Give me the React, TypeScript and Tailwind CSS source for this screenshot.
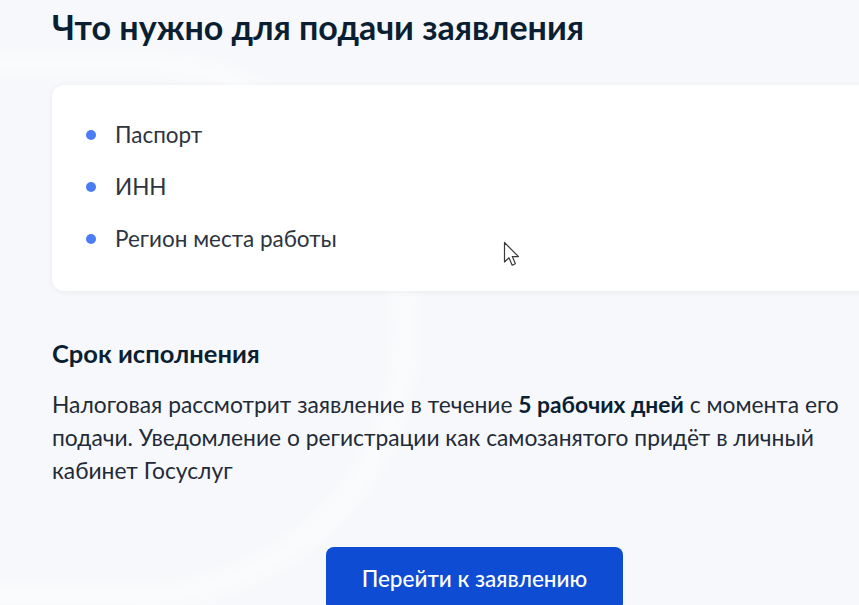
const items = ['Паспорт', 'ИНН', 'Регион места работы'];

function Cursor() {
  return (
    <svg className="absolute left-[503px] top-[241px]" width="20" height="28" viewBox="0 0 20 28" fill="none">
      <path
        d="M1.5 1.5 L1.5 21 L6 16.8 L9.2 24.2 L12.4 22.8 L9.3 15.6 L15.5 15.6 Z"
        fill="#fff"
        stroke="#3a3a3a"
        strokeWidth="1.2"
        strokeLinejoin="round"
      />
    </svg>
  );
}

export default function App() {
  return (
    <div
      className="relative w-full h-[605px] overflow-hidden bg-[#f7f8fb]"
      style={{ fontFamily: 'Lato, "Noto Sans", sans-serif' }}
    >
      <div className="pointer-events-none absolute -left-[300px] top-[50px] w-[720px] h-[560px] rounded-full border-[28px] border-white/40 blur-[6px]" />
      <div className="relative w-[845px] ml-[52px] pt-[7px]">
        <h1 className="text-[34px] leading-[40px] font-bold text-[#0b1f33]">
          Что нужно для подачи заявления
        </h1>

        <div className="mt-[38px] rounded-xl bg-white shadow-[0_1px_6px_rgba(11,31,51,0.06)] pl-[34px] pt-[35px] pb-[37px] flex flex-col gap-[22px]">
          {items.map((t) => (
            <div key={t} className="flex items-center gap-[19px]">
              <span className="w-[10px] h-[10px] rounded-full bg-[#4a7cf5] shrink-0" />
              <span className="text-[22.5px] leading-[30px] text-[#2c3440]">{t}</span>
            </div>
          ))}
        </div>

        <h2 className="mt-[47px] text-[25.5px] leading-[30px] font-bold text-[#0b1f33]">
          Срок исполнения
        </h2>
        <p className="mt-[20px] max-w-[800px] text-[22.8px] leading-[33px] text-[#1f2b38]">
          Налоговая рассмотрит заявление в течение <b className="font-bold text-[#0b1f33]">5 рабочих дней</b> с момента его
          подачи. Уведомление о регистрации как самозанятого придёт в личный кабинет Госуслуг
        </p>

        <div className="mt-[60px] flex justify-center">
          <button className="w-[297px] h-[64px] rounded-lg bg-[#0d4cd3] text-white text-[22.5px] font-medium">
            Перейти к заявлению
          </button>
        </div>
      </div>
      <Cursor />
    </div>
  );
}
